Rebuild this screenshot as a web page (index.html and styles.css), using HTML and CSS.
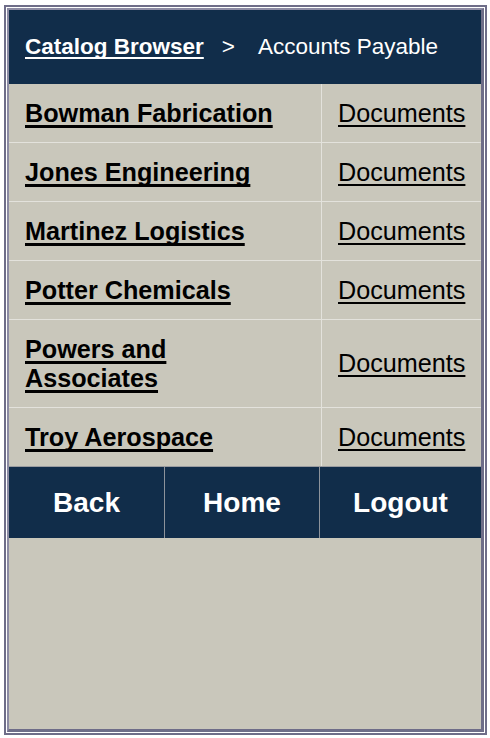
FILE: index.html
```html
<!DOCTYPE html>
<html>
<head>
<meta charset="utf-8">
<title>Catalog Browser</title>
<link rel="stylesheet" href="styles.css">
</head>
<body>
<div class="frame">
  <div class="frame-in">
    <div class="screen">
      <div class="header">
        <a class="crumb" href="#">Catalog Browser</a><span class="sep">&gt;</span><span class="current">Accounts Payable</span>
      </div>
      <div class="list">
        <div class="row"><div class="name"><a href="#">Bowman Fabrication</a></div><div class="docs"><a href="#">Documents</a></div></div>
        <div class="row"><div class="name"><a href="#">Jones Engineering</a></div><div class="docs"><a href="#">Documents</a></div></div>
        <div class="row"><div class="name"><a href="#">Martinez Logistics</a></div><div class="docs"><a href="#">Documents</a></div></div>
        <div class="row"><div class="name"><a href="#">Potter Chemicals</a></div><div class="docs"><a href="#">Documents</a></div></div>
        <div class="row"><div class="name"><a href="#">Powers and<br>Associates</a></div><div class="docs"><a href="#">Documents</a></div></div>
        <div class="row"><div class="name"><a href="#">Troy Aerospace</a></div><div class="docs"><a href="#">Documents</a></div></div>
      </div>
      <div class="nav">
        <div class="nav-item">Back</div>
        <div class="nav-item">Home</div>
        <div class="nav-item">Logout</div>
      </div>
      <div class="filler"></div>
    </div>
  </div>
</div>
</body>
</html>
```

FILE: styles.css
```css
html, body {
  margin: 0;
  padding: 0;
  background: #ffffff;
  height: 738px;
}
body {
  font-family: "Liberation Sans", Arial, sans-serif;
  display: flex;
  flex-direction: column;
}
a {
  text-decoration-skip-ink: none;
}
.frame {
  margin: 5px 3px 3px 4px;
  flex: 1;
  display: flex;
  flex-direction: column;
  border: 2px solid #6e6d88;
  padding: 1px;
  background: #ffffff;
}
.frame-in {
  flex: 1;
  display: flex;
  flex-direction: column;
  border-style: solid;
  border-color: #8c8ba3 #6e6d88 #6e6d88 #8c8ba3;
  border-width: 2px 3px 3px 2px;
  background: #c9c7bb;
}
.screen {
  flex: 1;
  display: flex;
  flex-direction: column;
  background: #c9c7bb;
  border-bottom: 3px solid #c9c7bb;
}
.header {
  background: #112d4a;
  height: 74px;
  display: flex;
  align-items: center;
  padding: 0 16px;
  font-size: 22.5px;
  color: #ffffff;
  white-space: nowrap;
}
.crumb {
  color: #ffffff;
  font-weight: bold;
  text-decoration: underline;
  text-decoration-thickness: 2px;
  text-underline-offset: 3px;
}
.sep {
  padding: 0 23px 0 18px;
}
.list {
  display: flex;
  flex-direction: column;
  gap: 1px;
  background: #e3e2dc;
}
.row {
  display: grid;
  grid-template-columns: 312px 1fr;
  column-gap: 1px;
  background: #e3e2dc;
}
.name, .docs {
  background: #c9c7bb;
  padding: 14.5px 16px;
  font-size: 25.2px;
  line-height: 29px;
  display: flex;
  align-items: center;
}
.name a {
  color: #000000;
  font-weight: bold;
  text-decoration-thickness: 2.5px;
  text-underline-offset: 3px;
}
.docs a {
  color: #000000;
  font-weight: normal;
  text-decoration-thickness: 1.5px;
  text-underline-offset: 3px;
}
.nav {
  display: grid;
  grid-template-columns: 155px 154px 1fr;
  column-gap: 1px;
  background: #8d939b;
  border-top: 1px solid #9a9ca0;
}
.nav-item {
  background: #112d4a;
  color: #ffffff;
  font-weight: bold;
  font-size: 28px;
  height: 71px;
  display: flex;
  align-items: center;
  justify-content: center;
}
.filler {
  flex: 1;
}
```
